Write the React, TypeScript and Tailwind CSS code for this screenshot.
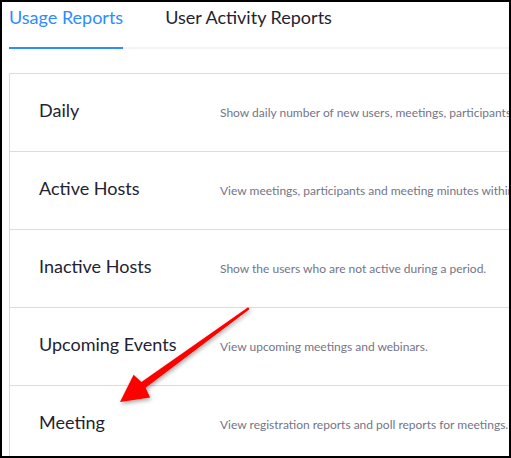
const reports = [
  { title: "Daily", description: "Show daily number of new users, meetings, participants and meeting minutes." },
  { title: "Active Hosts", description: "View meetings, participants and meeting minutes within a specified time range." },
  { title: "Inactive Hosts", description: "Show the users who are not active during a period." },
  { title: "Upcoming Events", description: "View upcoming meetings and webinars." },
  { title: "Meeting", description: "View registration reports and poll reports for meetings." },
];

function Arrow() {
  return (
    <svg
      className="pointer-events-none absolute left-[-2px] top-[-2px] h-[458px] w-[511px]"
      viewBox="0 0 511 458"
    >
      <defs>
        <filter id="arrow-shadow" x="-20%" y="-20%" width="140%" height="140%">
          <feDropShadow dx="1" dy="2" stdDeviation="2" floodColor="#000" floodOpacity="0.35" />
        </filter>
      </defs>
      <polygon
        points="249.2,308 249.1,309.6 145.6,387.7 150.1,397.4 120,402 133.6,374.8 141.4,382.1 247.7,307.6"
        fill="#ff0000"
        filter="url(#arrow-shadow)"
      />
    </svg>
  );
}

export default function App() {
  return (
    <div className="relative h-[458px] w-[511px] overflow-hidden border-2 border-black bg-white font-['Lato','Liberation_Sans',sans-serif]">
      <div className="pl-[7px] pt-[5px]">
        <div className="flex border-b-2 border-[#f3f3f5]">
          <div className="-mb-[2px] border-b-2 border-[#2d8cff] pb-[20px] text-[18px] leading-[20px] text-[#2d8cff]">
            Usage Reports
          </div>
          <div className="ml-[42px] text-[18px] leading-[20px] text-[#232333]">
            User Activity Reports
          </div>
        </div>

        <div className="mt-[24px] border-l border-t border-[#dcdcdc]">
          {reports.map((item) => (
            <div
              key={item.title}
              className="flex h-[78px] items-baseline whitespace-nowrap border-b border-[#dcdcdc] pb-[6px] pl-[29px] pt-[26px]"
            >
              <div className="w-[181px] shrink-0 text-[18px] leading-[20px] text-[#232333]">
                {item.title}
              </div>
              <div className="text-[12px] leading-[16px] text-[#747487]">
                {item.description}
              </div>
            </div>
          ))}
        </div>
      </div>
      <Arrow />
    </div>
  );
}
